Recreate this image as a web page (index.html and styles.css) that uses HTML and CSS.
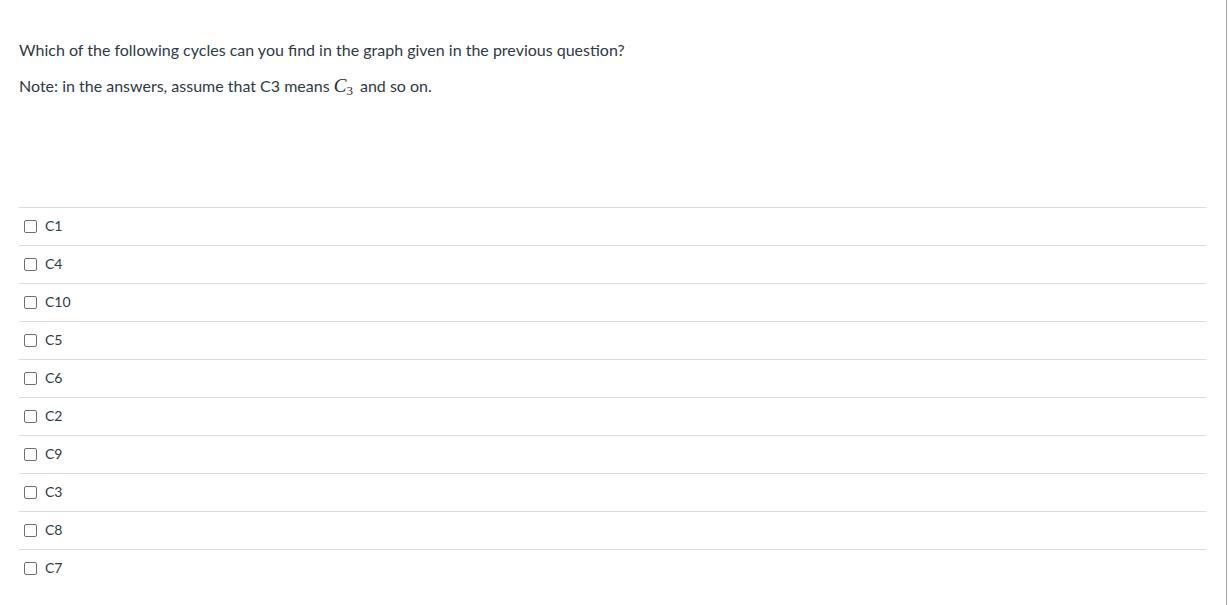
FILE: index.html
```html
<!DOCTYPE html>
<html>
<head>
<meta charset="utf-8">
<link rel="stylesheet" href="styles.css">
</head>
<body>
<div class="page">
  <div class="question">
    <p class="q-text">Which of the following cycles can you find in the graph given in the previous question?</p>
    <p class="q-text">Note: in the answers, assume that C3 means <span class="math"><i>C</i><sub>3</sub></span> and so on.</p>
  </div>
  <div class="answers">
    <label class="answer"><span class="box"></span><span class="label">C1</span></label>
    <label class="answer"><span class="box"></span><span class="label">C4</span></label>
    <label class="answer"><span class="box"></span><span class="label">C10</span></label>
    <label class="answer"><span class="box"></span><span class="label">C5</span></label>
    <label class="answer"><span class="box"></span><span class="label">C6</span></label>
    <label class="answer"><span class="box"></span><span class="label">C2</span></label>
    <label class="answer"><span class="box"></span><span class="label">C9</span></label>
    <label class="answer"><span class="box"></span><span class="label">C3</span></label>
    <label class="answer"><span class="box"></span><span class="label">C8</span></label>
    <label class="answer"><span class="box"></span><span class="label">C7</span></label>
  </div>
</div>
</body>
</html>
```
FILE: styles.css
```css
html, body {
  margin: 0;
  padding: 0;
  background: #fff;
}
body {
  font-family: Lato, "Liberation Sans", sans-serif;
  color: #2d3b45;
  font-size: 16px;
}
.page {
  width: 1226px;
  height: 605px;
  border-right: 1px solid #a5a5a5;
  box-sizing: content-box;
}
.question {
  padding: 40px 19px 0 19px;
  height: 207px;
  box-sizing: border-box;
}
.q-text {
  margin: 0 0 16px 0;
  font-size: 16px;
  line-height: 20px;
}
.math {
  font-family: "Liberation Serif", serif;
  font-size: 19px;
  margin-right: 3px;
  color: #1f2a33;
}
.math i {
  font-style: italic;
}
.math sub {
  font-size: 13px;
  vertical-align: -3px;
  font-style: normal;
}
.answers {
  margin: 0 20px 0 19px;
}
.answer {
  display: flex;
  align-items: center;
  height: 38px;
  border-top: 1px solid #dcdcdc;
  box-sizing: border-box;
  padding-left: 5px;
  padding-bottom: 2px;
}
.box {
  width: 11px;
  height: 11px;
  border: 1px solid #6f6f6f;
  border-radius: 2px;
  margin-right: 8px;
  margin-top: 2px;
  background: #fff;
}
.label {
  font-size: 14px;
  color: #2d3b45;
}
```
